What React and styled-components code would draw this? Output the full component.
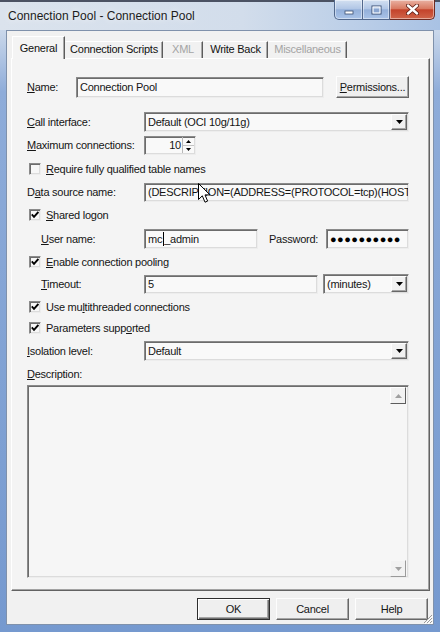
import React from "react";
import styled, { createGlobalStyle, css } from "styled-components";

const GlobalStyle = createGlobalStyle`
  html, body {
    margin: 0;
    padding: 0;
    background: #ffffff;
  }
`;

// classic 3D edges
const sunken = css`
  border: 1px solid;
  border-color: #8a8a8a #ededed #ededed #8a8a8a;
  box-shadow: inset 1px 1px 0 #6c6c6c, inset -1px -1px 0 #dcdcdc;
`;

const raised = css`
  border: 1px solid;
  border-color: #fdfdfd #676767 #676767 #fdfdfd;
  box-shadow: inset -1px -1px 0 #a5a5a5;
`;

const Window = styled.div`
  width: 440px;
  height: 632px;
  box-sizing: border-box;
  display: flex;
  flex-direction: column;
  border-top: 2px solid #4b5263;
  padding: 0 6px 7px;
  background: linear-gradient(180deg, #d9e2ee 0px, #c9d7ea 30px, #8eacd9 90px, #7599cf 100%);
  font-family: "Liberation Sans", Arial, sans-serif;
  font-size: 11px;
  letter-spacing: -0.25px;
  color: #151515;
`;

const TitleBar = styled.div`
  height: 28px;
  flex-shrink: 0;
  display: flex;
  align-items: flex-start;
  margin: 0 -6px;
  padding: 0 5px 0 8px;
  background: linear-gradient(90deg, #dbe3ed 0%, #d2ddeb 55%, #bccfe8 80%, #a9c2e4 100%);
`;

const Title = styled.div`
  line-height: 28px;
  font-size: 12px;
  letter-spacing: 0;
  color: #1c1c1c;
  text-shadow: 0 0 6px rgba(255, 255, 255, 0.9);
`;

const CaptionButtons = styled.div`
  display: flex;
  margin-left: auto;
  margin-top: -2px;
  height: 20px;
`;

const CaptionButton = styled.div`
  width: ${p => p.$w}px;
  height: 20px;
  box-sizing: border-box;
  display: flex;
  align-items: center;
  justify-content: center;
  border: 1px solid ${p => (p.$close ? "#6e2b22" : "#52688c")};
  border-top: none;
  border-left-width: ${p => (p.$first ? 1 : 0)}px;
  border-bottom-left-radius: ${p => (p.$first ? 5 : 0)}px;
  border-bottom-right-radius: ${p => (p.$close ? 5 : 0)}px;
  box-shadow: inset 0 0 0 1px rgba(255, 255, 255, 0.45);
  background: ${p =>
    p.$close
      ? "linear-gradient(180deg, #e9b2a3 0%, #d97a62 45%, #c4432b 52%, #d0654a 100%)"
      : "linear-gradient(180deg, #d3e0f1 0%, #b2c7e6 45%, #94b0da 52%, #a9c3e8 100%)"};
`;

const Client = styled.div`
  position: relative;
  flex: 1;
  display: flex;
  flex-direction: column;
  background: #f1f1f1;
  border: 1px solid #7f91ab;
`;

const TabStrip = styled.div`
  height: 27px;
  flex-shrink: 0;
  display: flex;
  align-items: flex-end;
  padding-left: 5px;
`;

const Tab = styled.div`
  position: relative;
  z-index: ${p => (p.$active ? 2 : 1)};
  width: ${p => p.$w}px;
  height: ${p => (p.$active ? 23 : 17)}px;
  margin-bottom: ${p => (p.$active ? -1 : 0)}px;
  box-sizing: border-box;
  display: flex;
  align-items: flex-end;
  justify-content: center;
  padding-bottom: ${p => (p.$active ? 4 : 2)}px;
  line-height: 13px;
  border-top: 1px solid #ffffff;
  border-left: 1px solid ${p => (p.$active ? "#ffffff" : "transparent")};
  border-right: 1px solid #5c5c5c;
  box-shadow: inset -1px 0 0 #a9a9a9;
  background: ${p => (p.$active ? "#f4f4f4" : "transparent")};
  color: ${p => (p.$disabled ? "#a4a4a4" : "#111111")};
`;

const Panel = styled.div`
  flex: 1;
  display: flex;
  flex-direction: column;
  margin: 0 3px 0 4px;
  padding: 17px 20px 12px 15px;
  background: #f4f4f4;
  border-top: 1px solid #ffffff;
  border-left: 1px solid #ffffff;
  border-right: 1px solid #626262;
  border-bottom: 1px solid #626262;
  box-shadow: inset -1px -1px 0 #a3a3a3;
`;

const Row = styled.div`
  position: relative;
  flex-shrink: 0;
  display: flex;
  align-items: center;
  height: ${p => p.$h || 20}px;
  margin-top: ${p => p.$mt || 0}px;
`;

const Label = styled.span`
  flex-shrink: 0;
  width: ${p => p.$w || 117}px;
  padding-left: ${p => p.$indent || 0}px;
  box-sizing: border-box;
  white-space: nowrap;
`;

const TextBox = styled.div`
  ${sunken};
  box-sizing: border-box;
  height: ${p => p.$h || 20}px;
  width: ${p => (p.$w ? `${p.$w}px` : "auto")};
  flex: ${p => (p.$w ? "none" : 1)};
  display: flex;
  align-items: center;
  justify-content: ${p => (p.$right ? "flex-end" : "flex-start")};
  padding: 0 2px 0 3px;
  overflow: hidden;
  white-space: nowrap;
  background: #f9f9f9;
`;

const ComboText = styled.span`
  flex: 1;
  overflow: hidden;
`;

const DropButton = styled.div`
  ${raised};
  flex-shrink: 0;
  width: 16px;
  height: 16px;
  box-sizing: border-box;
  display: flex;
  align-items: center;
  justify-content: center;
  margin-right: -1px;
  background: #f1f1f1;
`;

const SpinColumn = styled.div`
  display: flex;
  flex-direction: column;
  margin-left: 1px;
  margin-right: -1px;
  height: 16px;
`;

const SpinButton = styled.div`
  width: 12px;
  height: 8px;
  display: flex;
  align-items: center;
  justify-content: center;
  border-left: 1px solid #b8b8b8;
  border-top: ${p => (p.$down ? "1px solid #c4c4c4" : "none")};
  box-sizing: border-box;
`;

const Password = styled.span`
  font-size: 11px;
  letter-spacing: 0.45px;
  line-height: 12px;
  color: #000;
`;

const Caret = styled.span`
  display: inline-block;
  width: 1px;
  height: 14px;
  margin: 0 0.5px;
  background: #000;
  vertical-align: middle;
`;

const Gap = styled.span`
  flex-shrink: 0;
  width: ${p => p.$w}px;
`;

const CheckRow = styled(Row)`
  padding-left: 2px;
`;

const CheckBox = styled.span`
  ${sunken};
  width: 12px;
  height: 12px;
  box-sizing: border-box;
  display: inline-flex;
  align-items: center;
  justify-content: center;
  margin-right: 5px;
  background: #f7f7f7;
`;

const PushButton = styled.div`
  ${raised};
  box-sizing: border-box;
  width: ${p => p.$w || 73}px;
  height: ${p => p.$h || 22}px;
  margin-left: ${p => (p.$pushRight ? "auto" : "0")};
  display: flex;
  align-items: center;
  justify-content: center;
  background: #efefef;
  ${p =>
    p.$default &&
    css`
      border-color: #2e2e2e;
      box-shadow: inset 1px 1px 0 #ffffff, inset -1px -1px 0 #6f6f6f, inset -2px -2px 0 #a5a5a5;
    `}
`;

const Memo = styled.div`
  ${sunken};
  flex: 1;
  margin-top: 3px;
  display: flex;
  justify-content: flex-end;
  background: #f6f6f6;
`;

const ScrollColumn = styled.div`
  width: 17px;
  display: flex;
  flex-direction: column;
  justify-content: space-between;
  padding: 1px 0 0;
  margin-right: 1px;
`;

const ScrollButton = styled.div`
  width: 16px;
  height: ${p => p.$h}px;
  box-sizing: border-box;
  display: flex;
  align-items: center;
  justify-content: center;
  border: 1px solid;
  border-color: ${p => (p.$flat ? "#f6f6f6 #9a9a9a #9a9a9a #f6f6f6" : "#ffffff #5d5d5d #5d5d5d #ffffff")};
  background: #f2f2f2;
`;

const Footer = styled.div`
  height: 33px;
  flex-shrink: 0;
  display: flex;
  justify-content: flex-end;
  gap: 6px;
  padding: 7px 5px 0 0;
  box-sizing: border-box;
`;

const Pointer = styled.svg`
  position: absolute;
  left: 171px;
  top: 1px;
`;

const Grip = styled.svg`
  position: absolute;
  right: 0;
  bottom: 0;
`;

const Tri = ({ up, color = "#000", w = 7, h = 4 }) => (
  <svg width={w} height={h} viewBox={`0 0 ${w} ${h}`}>
    <path d={up ? `M0 ${h}H${w}L${w / 2} 0Z` : `M0 0H${w}L${w / 2} ${h}Z`} fill={color} />
  </svg>
);

const Tick = () => (
  <svg width="8" height="8" viewBox="0 0 8 8">
    <path d="M0.8 3.4 L3 5.8 L7.4 0.9" fill="none" stroke="#000" strokeWidth="1.9" />
  </svg>
);

const Combo = ({ children, w }) => (
  <TextBox $w={w}>
    <ComboText>{children}</ComboText>
    <DropButton>
      <Tri />
    </DropButton>
  </TextBox>
);

const Check = ({ checked, children, mt }) => (
  <CheckRow $h={18} $mt={mt}>
    <CheckBox>{checked && <Tick />}</CheckBox>
    <span>{children}</span>
  </CheckRow>
);

const tabs = [
  { label: "General", w: 53, active: true },
  { label: "Connection Scripts", w: 98 },
  { label: "XML", w: 40, disabled: true },
  { label: "Write Back", w: 65 },
  { label: "Miscellaneous", w: 79, disabled: true },
];

const App = () => (
  <>
    <GlobalStyle />
    <Window>
      <TitleBar>
        <Title>Connection Pool - Connection Pool</Title>
        <CaptionButtons>
          <CaptionButton $w={29} $first>
            <svg width="10" height="10" viewBox="0 0 10 10">
              <rect x="1" y="6" width="8" height="3" fill="#fff" stroke="#3b4f72" strokeWidth="0.8" />
            </svg>
          </CaptionButton>
          <CaptionButton $w={27}>
            <svg width="11" height="10" viewBox="0 0 11 10">
              <rect x="1" y="1" width="9" height="8" fill="none" stroke="#3b4f72" strokeWidth="1" />
              <rect x="2" y="2" width="7" height="6" fill="none" stroke="#fff" strokeWidth="1" />
              <rect x="3" y="4" width="5" height="3" fill="#8aa5d0" />
            </svg>
          </CaptionButton>
          <CaptionButton $w={45} $close>
            <svg width="13" height="11" viewBox="0 0 13 11">
              <path d="M2 1.5 L11 9.5 M11 1.5 L2 9.5" stroke="#5a1a12" strokeWidth="4" strokeLinecap="round" />
              <path d="M2 1.5 L11 9.5 M11 1.5 L2 9.5" stroke="#ffffff" strokeWidth="2.4" strokeLinecap="round" />
            </svg>
          </CaptionButton>
        </CaptionButtons>
      </TitleBar>

      <Client>
        <TabStrip>
          {tabs.map(t => (
            <Tab key={t.label} $w={t.w} $active={t.active} $disabled={t.disabled}>
              {t.label}
            </Tab>
          ))}
        </TabStrip>

        <Panel>
          <Row $h={22}>
            <Label $w={49}>
              <u>N</u>ame:
            </Label>
            <TextBox $w={248} $h={21}>Connection Pool</TextBox>
            <PushButton $w={73} $h={22} $pushRight>
              <span>
                <u>P</u>ermissions...
              </span>
            </PushButton>
          </Row>

          <Row $mt={14}>
            <Label>
              <u>C</u>all interface:
            </Label>
            <Combo>Default (OCI 10g/11g)</Combo>
          </Row>

          <Row $mt={3}>
            <Label>
              <u>M</u>aximum connections:
            </Label>
            <TextBox $w={52} $h={19} $right>
              <span>10</span>
              <SpinColumn>
                <SpinButton>
                  <Tri up w={5} h={3} />
                </SpinButton>
                <SpinButton $down>
                  <Tri w={5} h={3} />
                </SpinButton>
              </SpinColumn>
            </TextBox>
          </Row>

          <Check mt={5}>
            <u>R</u>equire fully qualified table names
          </Check>

          <Row $mt={4}>
            <Label>
              D<u>a</u>ta source name:
            </Label>
            <TextBox $h={19}>(DESCRIPTION=(ADDRESS=(PROTOCOL=tcp)(HOST</TextBox>
            <Pointer width="13" height="21" viewBox="0 0 13 21">
              <path
                d="M0.5 0.5 V16.5 L4.3 12.8 L7 19.2 L9.6 18.1 L7 11.9 H12 Z"
                fill="#ffffff"
                stroke="#000"
                strokeWidth="1"
                strokeLinejoin="round"
              />
            </Pointer>
          </Row>

          <Check checked mt={4}>
            <u>S</u>hared logon
          </Check>

          <Row $mt={5}>
            <Label $indent={14}>
              <u>U</u>ser name:
            </Label>
            <TextBox $w={114}>
              mc<Caret />_admin
            </TextBox>
            <Label $w={68} $indent={11}>
              Password:
            </Label>
            <TextBox>
              <Password>●●●●●●●●●●</Password>
            </TextBox>
          </Row>

          <Check checked mt={4}>
            <u>E</u>nable connection pooling
          </Check>

          <Row $mt={3}>
            <Label $indent={14}>
              <u>T</u>imeout:
            </Label>
            <TextBox $w={174} $h={19}>5</TextBox>
            <Gap $w={5} />
            <Combo>(minutes)</Combo>
          </Row>

          <Check checked mt={4}>
            Use mu<u>l</u>tithreaded connections
          </Check>

          <Check checked mt={3}>
            Parameters supp<u>o</u>rted
          </Check>

          <Row $mt={4}>
            <Label>
              <u>I</u>solation level:
            </Label>
            <Combo>Default</Combo>
          </Row>

          <Row $h={16} $mt={5}>
            <Label>
              <u>D</u>escription:
            </Label>
          </Row>

          <Memo>
            <ScrollColumn>
              <ScrollButton $h={17}>
                <Tri up color="#a0a0a0" w={7} h={4} />
              </ScrollButton>
              <ScrollButton $h={17} $flat>
                <Tri color="#a0a0a0" w={7} h={4} />
              </ScrollButton>
            </ScrollColumn>
          </Memo>
        </Panel>

        <Footer>
          <PushButton $default>OK</PushButton>
          <PushButton>Cancel</PushButton>
          <PushButton>Help</PushButton>
        </Footer>

        <Grip width="12" height="12" viewBox="0 0 12 12">
          <path d="M11 3 L3 11 M11 6 L6 11 M11 9 L9 11" stroke="#9a9a9a" strokeWidth="1" />
          <path d="M12 4 L4 12 M12 7 L7 12 M12 10 L10 12" stroke="#ffffff" strokeWidth="1" />
        </Grip>
      </Client>
    </Window>
  </>
);

export default App;
